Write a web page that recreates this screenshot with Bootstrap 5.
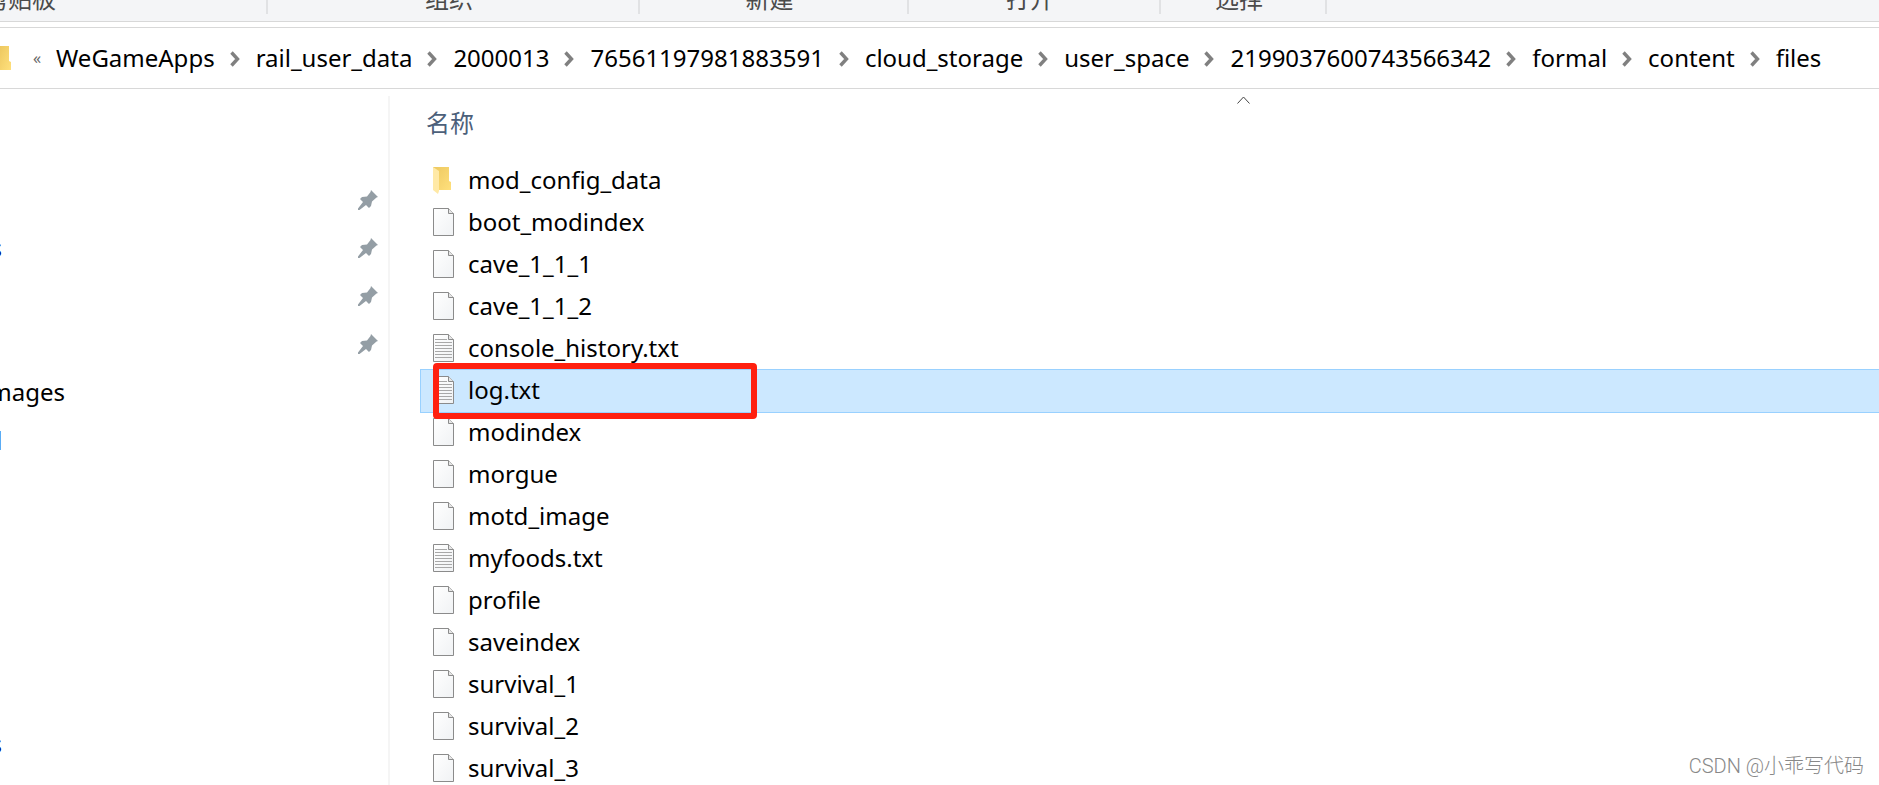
<!DOCTYPE html>
<html lang="zh-CN">
<head>
<meta charset="utf-8">
<meta name="viewport" content="width=device-width, initial-scale=1">
<title>files</title>
<link href="https://cdn.jsdelivr.net/npm/bootstrap@5.3.0/dist/css/bootstrap.min.css" rel="stylesheet">
<style>
  body { font: 24px/32px "Noto Sans", "Noto Sans CJK SC", sans-serif; color: #000; background: #fff; }
  a, a:hover { color: #000; text-decoration: none; }
  .explorer { height: 100vh; }
  .ribbon { height: 22px; background: #f4f5f7; border-bottom: 1px solid #d8d8d8; color: #4b4b4b; font-family: "Noto Sans CJK SC", sans-serif; }
  .ribbon-group { height: 14px; border-right: 2px solid #e1e2e4; padding-right: 8px; }
  .ribbon-group span { line-height: 32px; white-space: nowrap; }
  .g-clip { width: 268px; } .g-clip span { width: 56px; display: flex; justify-content: flex-end; }
  .g-org { width: 372px; } .g-new { width: 269px; }
  .g-open { width: 252px; } .g-select { width: 166px; }
  .address { height: 62px; margin-top: 5px; border-top: 1px solid #d8d8d8; border-bottom: 1px solid #d8d8d8; }
  .address .more { width: 44px; padding-left: 21px; font-size: 16px; color: #666; }
  .chev { width: 10px; height: 16px; margin: 2px 16px 0 15px; }
  .side { width: 390px; margin-top: 7px; padding-top: 80px; border-right: 2px solid #f5f5f5; }
  .side-row { height: 48px; }
  .side-row svg { width: 20px; height: 20px; margin-right: 10px; }
  .cut { overflow: hidden; }
  .cut-name { width: 65px; }
  .cut-edge { width: 2px; color: #00007a; }
  .cut-bar { width: 1px; height: 19px; background: #5aacf5; }
  .side-gap { height: 256px; }
  .head { height: 71px; padding: 17px 0 0 36px; }
  .sorter { color: #4c607a; font-family: "Noto Sans CJK SC", sans-serif; line-height: 32px; }
  .sort-mark { left: 847px; top: 7px; width: 13px; height: 8px; }
  .files { padding-left: 31px; }
  .file-row { height: 42px; padding: 0 0 2px 12px; gap: 14px; }
  .file-row svg { width: 21px; height: 28px; }
  .picked { background: #cce8ff; box-shadow: 0 0 0 1px #99d1ff; }
  .marker { left: 12px; top: -7px; width: 324px; height: 56px; border: 6px solid #ff2010; border-radius: 4px; z-index: 2; }
  .credit { right: 15px; bottom: 4px; font: 300 20px/30px Roboto, "Noto Sans CJK SC", sans-serif; color: #888; }
</style>
</head>
<body class="overflow-hidden">
<svg class="position-absolute" width="0" height="0" aria-hidden="true">
  <defs>
    <linearGradient id="paper" x2="1" y2="1"><stop stop-color="#fff"/><stop offset="1" stop-color="#f0f2f4"/></linearGradient>
    <linearGradient id="gold" x2="1" y2="1"><stop stop-color="#edc860"/><stop offset="1" stop-color="#ffe07c"/></linearGradient>
  </defs>
  <symbol id="i-file" viewBox="0 0 21 28">
    <path d="M.5.5H15.500L20.500 5.500V27.500H.5Z" fill="url(#paper)" stroke="#8b8b8b"/>
    <path d="M15.500.5V5.500H20.500" fill="#e6e6e6" stroke="#8b8b8b"/>
  </symbol>
  <symbol id="i-text" viewBox="0 0 21 28">
    <use href="#i-file"/>
    <path d="M2 5.500H14M2 8.500H19M2 11.500H19M2 14.500H19M2 17.500H19M2 20.500H19M2 23.500H19" stroke="#a8a8a8"/>
  </symbol>
  <symbol id="i-folder" viewBox="0 0 21 28">
    <path d="M0 1H16V15L18 16V24H0Z" fill="url(#gold)"/>
    <path d="M0 1L6 5V25L5 28L0 24Z" fill="#ffe9a6"/>
  </symbol>
  <symbol id="i-pin" viewBox="0 0 20 20">
    <path d="M13 0L20 7L18.500 7.500L14 11.500L13 16L11 18L8 15L1.500 20L0 20V18.500L5 12L2 9L4 7L9 6.500L12.500 2Z" fill="#949ea5"/>
  </symbol>
  <symbol id="i-chev" viewBox="0 0 10 16"><path d="M1.500 1.500L7.500 8L1.500 14.500" fill="none" stroke="#808080" stroke-width="3.400"/></symbol>
</svg>

<div class="explorer d-flex flex-column position-relative">
  <header class="ribbon d-flex flex-shrink-0 overflow-hidden">
    <div class="ribbon-group g-clip d-flex align-items-end flex-shrink-0"><span>剪贴板</span></div>
    <div class="ribbon-group g-org d-flex align-items-end justify-content-center flex-shrink-0"><span>组织</span></div>
    <div class="ribbon-group g-new d-flex align-items-end justify-content-center flex-shrink-0"><span>新建</span></div>
    <div class="ribbon-group g-open d-flex align-items-end justify-content-center flex-shrink-0"><span>打开</span></div>
    <div class="ribbon-group g-select d-flex align-items-end justify-content-center flex-shrink-0"><span>选择</span></div>
  </header>

  <nav class="address d-flex align-items-center flex-shrink-0" aria-label="breadcrumb">
    <svg width="12" height="24" viewBox="0 0 12 24" aria-hidden="true"><path d="M0 0H9V15L11 16V24H0Z" fill="url(#gold)"/></svg>
    <span class="more">«</span>
    <ol class="list-unstyled d-flex align-items-center text-nowrap mb-0">
      <li><a href="#">WeGameApps</a></li>
      <li class="d-flex align-items-center"><svg class="chev"><use href="#i-chev"/></svg><a href="#">rail_user_data</a></li>
      <li class="d-flex align-items-center"><svg class="chev"><use href="#i-chev"/></svg><a href="#">2000013</a></li>
      <li class="d-flex align-items-center"><svg class="chev"><use href="#i-chev"/></svg><a href="#">76561197981883591</a></li>
      <li class="d-flex align-items-center"><svg class="chev"><use href="#i-chev"/></svg><a href="#">cloud_storage</a></li>
      <li class="d-flex align-items-center"><svg class="chev"><use href="#i-chev"/></svg><a href="#">user_space</a></li>
      <li class="d-flex align-items-center"><svg class="chev"><use href="#i-chev"/></svg><a href="#">2199037600743566342</a></li>
      <li class="d-flex align-items-center"><svg class="chev"><use href="#i-chev"/></svg><a href="#">formal</a></li>
      <li class="d-flex align-items-center"><svg class="chev"><use href="#i-chev"/></svg><a href="#">content</a></li>
      <li class="d-flex align-items-center"><svg class="chev"><use href="#i-chev"/></svg><a href="#">files</a></li>
    </ol>
  </nav>

  <div class="d-flex flex-grow-1 overflow-hidden">
    <aside class="side flex-shrink-0">
      <div class="side-row d-flex align-items-center justify-content-end"><svg><use href="#i-pin"/></svg></div>
      <div class="side-row d-flex align-items-center justify-content-between"><span class="cut cut-edge d-flex justify-content-end">s</span><svg><use href="#i-pin"/></svg></div>
      <div class="side-row d-flex align-items-center justify-content-end"><svg><use href="#i-pin"/></svg></div>
      <div class="side-row d-flex align-items-center justify-content-end"><svg><use href="#i-pin"/></svg></div>
      <div class="side-row d-flex align-items-center"><a href="#" class="cut cut-name d-flex justify-content-end">images</a></div>
      <div class="side-row d-flex align-items-center"><span class="cut-bar"></span></div>
      <div class="side-gap"></div>
      <div class="side-row d-flex align-items-center"><span class="cut cut-edge d-flex justify-content-end">s</span></div>
    </aside>
    <main class="flex-grow-1">
      <div class="head position-relative">
        <button type="button" class="sorter d-block border-0 bg-transparent p-0">名称</button>
        <svg class="sort-mark position-absolute" viewBox="0 0 13 8" aria-hidden="true"><path d="M.5 7.500L6.500 1L12.500 7.500" fill="none" stroke="#444"/></svg>
      </div>
      <div class="files d-flex flex-column">
        <a href="#" class="file-row d-flex align-items-center"><svg><use href="#i-folder"/></svg>mod_config_data</a>
        <a href="#" class="file-row d-flex align-items-center"><svg><use href="#i-file"/></svg>boot_modindex</a>
        <a href="#" class="file-row d-flex align-items-center"><svg><use href="#i-file"/></svg>cave_1_1_1</a>
        <a href="#" class="file-row d-flex align-items-center"><svg><use href="#i-file"/></svg>cave_1_1_2</a>
        <a href="#" class="file-row d-flex align-items-center"><svg><use href="#i-text"/></svg>console_history.txt</a>
        <a href="#" class="file-row picked d-flex align-items-center position-relative"><svg><use href="#i-text"/></svg>log.txt<span class="marker position-absolute"></span></a>
        <a href="#" class="file-row d-flex align-items-center"><svg><use href="#i-file"/></svg>modindex</a>
        <a href="#" class="file-row d-flex align-items-center"><svg><use href="#i-file"/></svg>morgue</a>
        <a href="#" class="file-row d-flex align-items-center"><svg><use href="#i-file"/></svg>motd_image</a>
        <a href="#" class="file-row d-flex align-items-center"><svg><use href="#i-text"/></svg>myfoods.txt</a>
        <a href="#" class="file-row d-flex align-items-center"><svg><use href="#i-file"/></svg>profile</a>
        <a href="#" class="file-row d-flex align-items-center"><svg><use href="#i-file"/></svg>saveindex</a>
        <a href="#" class="file-row d-flex align-items-center"><svg><use href="#i-file"/></svg>survival_1</a>
        <a href="#" class="file-row d-flex align-items-center"><svg><use href="#i-file"/></svg>survival_2</a>
        <a href="#" class="file-row d-flex align-items-center"><svg><use href="#i-file"/></svg>survival_3</a>
      </div>
    </main>
  </div>
  <div class="credit position-absolute">CSDN @小乖写代码</div>
</div>
<script src="https://cdn.jsdelivr.net/npm/bootstrap@5.3.0/dist/js/bootstrap.bundle.min.js"></script>
</body>
</html>
